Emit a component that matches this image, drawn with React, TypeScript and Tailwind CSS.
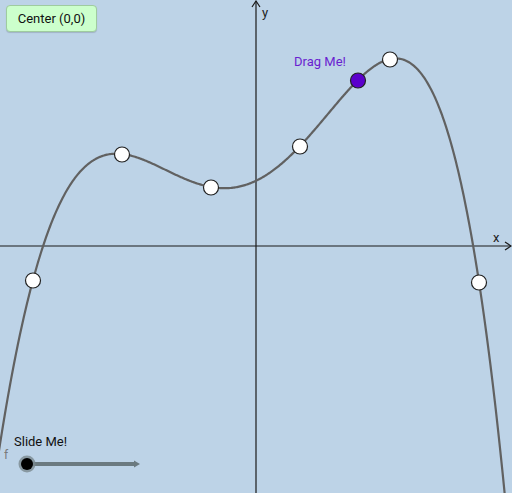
import React from 'react'

const W = 512
const H = 493
const OX = 256
const OY = 246

// points the curve passes through, screen coords
const knots: [number, number][] = [
  [33, 280],
  [122, 154],
  [211, 187],
  [300, 146],
  [358, 80],
  [390, 59],
  [479, 282],
]

function lagrange(x: number) {
  let sum = 0
  for (let i = 0; i < knots.length; i++) {
    let term = knots[i][1]
    for (let j = 0; j < knots.length; j++) {
      if (j !== i) term *= (x - knots[j][0]) / (knots[i][0] - knots[j][0])
    }
    sum += term
  }
  return sum
}

function curvePath() {
  const pts: string[] = []
  for (let x = -5; x <= W + 5; x += 1) {
    const y = lagrange(x)
    if (y < -50 || y > H + 50) continue
    pts.push(`${pts.length ? 'L' : 'M'}${x.toFixed(1)},${y.toFixed(2)}`)
  }
  return pts.join(' ')
}

const whites = [knots[0], knots[1], knots[2], knots[3], knots[5], knots[6]]

export default function App() {
  return (
    <div
      className="relative h-[493px] w-[512px] overflow-hidden bg-[#bdd3e7]"
      style={{ fontFamily: 'Roboto, "Liberation Sans", sans-serif' }}
    >
      <svg width={W} height={H} className="block">
        {/* axes */}
        <line x1={0} y1={OY} x2={W - 1} y2={OY} stroke="#1a1a1a" strokeWidth={1.2} />
        <path d={`M${W - 7},${OY - 4} L${W - 1},${OY} L${W - 7},${OY + 4}`} fill="none" stroke="#1a1a1a" strokeWidth={1.2} />
        <line x1={OX} y1={1} x2={OX} y2={H} stroke="#1a1a1a" strokeWidth={1.2} />
        <path d={`M${OX - 4},7 L${OX},1 L${OX + 4},7`} fill="none" stroke="#1a1a1a" strokeWidth={1.2} />
        <text x={262} y={17} fontSize={13} fill="#222">y</text>
        <text x={493} y={242} fontSize={13} fill="#222">x</text>

        <path d={curvePath()} fill="none" stroke="#616161" strokeWidth={2.2} />

        {whites.map(([x, y]) => (
          <circle key={x} cx={x} cy={y + 0.5} r={7.5} fill="#fff" stroke="#222" strokeWidth={1.2} />
        ))}
        <circle cx={358} cy={80.5} r={7.5} fill="#5b00cc" stroke="#222" strokeWidth={1.2} />
        <text x={294} y={66} fontSize={13} fill="#6a1fd0">Drag Me!</text>

        {/* slider */}
        <text x={4} y={459} fontSize={12} fill="#7a7a7a">f</text>
        <text x={14} y={446} fontSize={13} fill="#111">Slide Me!</text>
        <line x1={26} y1={464} x2={136} y2={464} stroke="#6b7a80" strokeWidth={4} />
        <path d="M134,460.5 L140,464 L134,467.5 Z" fill="#6b7a80" />
        <circle cx={27} cy={464} r={8.5} fill="#7a8a90" opacity={0.8} />
        <circle cx={27} cy={464} r={6} fill="#000" />
      </svg>

      <button className="absolute left-[6px] top-[5px] flex h-[27px] w-[91px] items-center justify-center rounded-[4px] border border-[#9fcb9f] bg-[#ccffcc] text-[13px] text-[#111] shadow-[0_1px_1px_rgba(0,0,0,0.15)]">
        Center (0,0)
      </button>
    </div>
  )
}
